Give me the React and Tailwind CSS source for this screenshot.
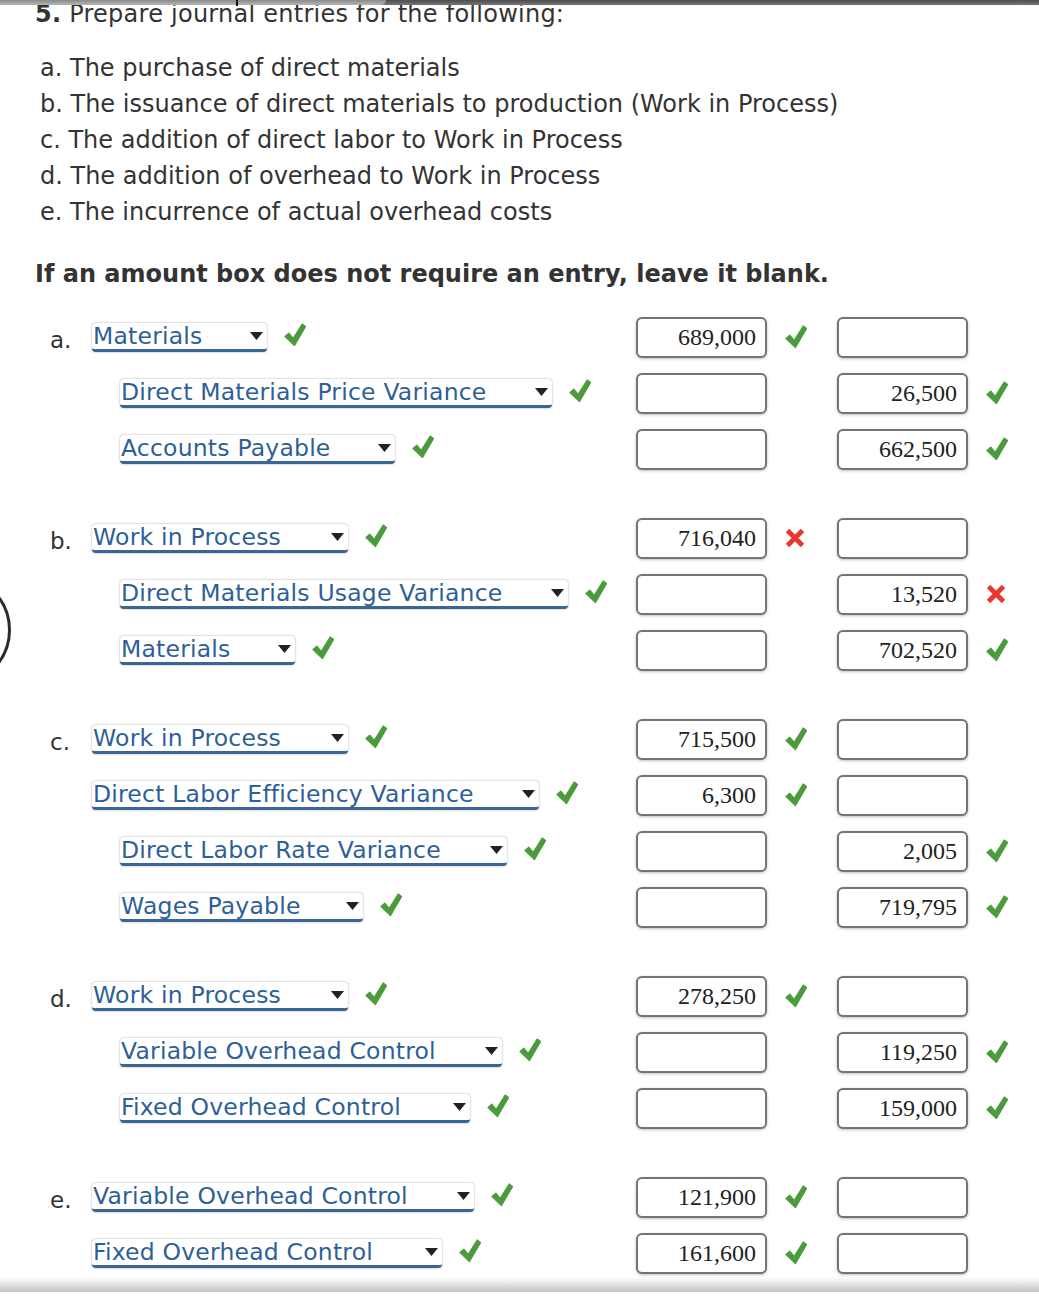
import React from "react";

const groups = [
  {
    letter: "a.",
    rows: [
      { label: "Materials", indent: false, w: "w-[175px]", debit: "689,000", dMark: "check" },
      { label: "Direct Materials Price Variance", indent: true, w: "w-[432px]", credit: "26,500", cMark: "check" },
      { label: "Accounts Payable", indent: true, w: "w-[275px]", credit: "662,500", cMark: "check" },
    ],
  },
  {
    letter: "b.",
    rows: [
      { label: "Work in Process", indent: false, w: "w-[256px]", debit: "716,040", dMark: "x" },
      { label: "Direct Materials Usage Variance", indent: true, w: "w-[448px]", credit: "13,520", cMark: "x" },
      { label: "Materials", indent: true, w: "w-[175px]", credit: "702,520", cMark: "check" },
    ],
  },
  {
    letter: "c.",
    rows: [
      { label: "Work in Process", indent: false, w: "w-[256px]", debit: "715,500", dMark: "check" },
      { label: "Direct Labor Efficiency Variance", indent: false, w: "w-[447px]", debit: "6,300", dMark: "check" },
      { label: "Direct Labor Rate Variance", indent: true, w: "w-[387px]", credit: "2,005", cMark: "check" },
      { label: "Wages Payable", indent: true, w: "w-[243px]", credit: "719,795", cMark: "check" },
    ],
  },
  {
    letter: "d.",
    rows: [
      { label: "Work in Process", indent: false, w: "w-[256px]", debit: "278,250", dMark: "check" },
      { label: "Variable Overhead Control", indent: true, w: "w-[382px]", credit: "119,250", cMark: "check" },
      { label: "Fixed Overhead Control", indent: true, w: "w-[350px]", credit: "159,000", cMark: "check" },
    ],
  },
  {
    letter: "e.",
    rows: [
      { label: "Variable Overhead Control", indent: false, w: "w-[382px]", debit: "121,900", dMark: "check" },
      { label: "Fixed Overhead Control", indent: false, w: "w-[350px]", debit: "161,600", dMark: "check" },
    ],
  },
];

function Check() {
  return (
    <svg width="22" height="24" viewBox="0 0 22 24" className="shrink-0">
      <path
        d="M1 13.5 L4.8 10.2 L9.2 15.4 L18.2 1 L21.6 3.4 L10.4 22.6 Z"
        fill="#4b9b3d"
        stroke="#4b9b3d"
        strokeWidth="1.2"
        strokeLinejoin="round"
      />
    </svg>
  );
}

function XMark() {
  return (
    <svg width="20" height="20" viewBox="0 0 20 20" className="shrink-0">
      <path d="M2.5 2.5 L17.5 17.5 M17.5 2.5 L2.5 17.5" stroke="#e83a2c" strokeWidth="4.8" strokeLinecap="butt" />
    </svg>
  );
}

function Mark({ type }) {
  if (type === "check") return <Check />;
  if (type === "x") return <XMark />;
  return null;
}

function Select({ label, w }) {
  return (
    <div
      className={`${w} h-[29px] shrink-0 flex items-end justify-between bg-white rounded-[4px] border-b-[3px] border-[#3a6594] shadow-[0_0_2px_rgba(0,0,0,0.4)] pl-[1px] pr-[4px]`}
    >
      <span className="text-[23.5px] leading-[26px] text-[#2e5f97] whitespace-nowrap tracking-[0.2px]">{label}</span>
      <svg width="13" height="8" viewBox="0 0 13 8" className="mb-[9px] shrink-0">
        <path d="M0 0 L13 0 L6.5 8 Z" fill="#222" />
      </svg>
    </div>
  );
}

function Amount({ value }) {
  return (
    <div className="w-[131px] h-[41px] shrink-0 rounded-[6px] border-2 border-[#747474] bg-white shadow-[0_1px_3px_rgba(0,0,0,0.25)] flex items-center justify-end pr-[9px]">
      <span className="font-['Liberation_Serif',serif] text-[24px] text-[#222] leading-none">{value || ""}</span>
    </div>
  );
}

function Row({ row, letter }) {
  return (
    <div className="h-[56px] flex items-center">
      <div className="w-[636px] shrink-0 flex items-center">
        <div className="w-[92px] shrink-0 pl-[50px] pt-[6px] text-[23px] text-[#333]">{letter || ""}</div>
        {row.indent && <div className="w-[28px] shrink-0" />}
        <Select label={row.label} w={row.w} />
        <div className="ml-[17px] -mt-[4px]">
          <Mark type="check" />
        </div>
      </div>
      <Amount value={row.debit} />
      <div className="w-[70px] shrink-0 pl-[18px] flex items-center">
        <Mark type={row.dMark} />
      </div>
      <Amount value={row.credit} />
      <div className="pl-[18px] flex items-center">
        <Mark type={row.cMark} />
      </div>
    </div>
  );
}

export default function App() {
  return (
    <div className="w-[1039px] h-[1311px] bg-white font-['DejaVu_Sans',Verdana,sans-serif] text-[#333]">
      <div className="relative h-[1292px] overflow-hidden">
        {/* top bar */}
        <div className="absolute top-0 left-0 right-0 h-[5px] bg-linear-to-b from-[#4d4d4d] to-[#777]" />
        <div className="absolute top-0 left-0 w-[386px] h-[5px] rounded-br-[6px] bg-linear-to-b from-[#8a8a8a] to-[#b5b5b5]" />
        <div className="absolute top-0 left-[236px] w-[2px] h-[6px] bg-[#111]" />

        {/* decorative circle at left edge */}
        <div className="absolute left-[-101px] top-[574px] w-[112px] h-[112px] rounded-full border-[3px] border-[#2b2b2b]" />

        <div className="pl-[35px] h-[28px] leading-[28px] text-[24px] tracking-[0.25px] text-[#333]">
          <span className="font-bold">5.</span> Prepare journal entries for the following:
        </div>

        <div className="mt-[22px] pl-[40px] text-[24px] leading-[36px] text-[#333]">
          <div>a. The purchase of direct materials</div>
          <div>b. The issuance of direct materials to production (Work in Process)</div>
          <div>c. The addition of direct labor to Work in Process</div>
          <div>d. The addition of overhead to Work in Process</div>
          <div>e. The incurrence of actual overhead costs</div>
        </div>

        <div className="mt-[26px] pl-[35px] text-[24px] leading-[36px] font-bold text-[#333]">
          If an amount box does not require an entry, leave it blank.
        </div>

        <div className="mt-[17px] flex flex-col gap-[33px]">
          {groups.map((g) => (
            <div key={g.letter}>
              {g.rows.map((r, i) => (
                <Row key={i} row={r} letter={i === 0 ? g.letter : null} />
              ))}
            </div>
          ))}
        </div>

        {/* bottom fade */}
        <div className="absolute left-0 right-0 bottom-0 h-[15px] bg-linear-to-b from-[rgba(255,255,255,0)] to-[#c4c4c4]" />
      </div>
    </div>
  );
}
